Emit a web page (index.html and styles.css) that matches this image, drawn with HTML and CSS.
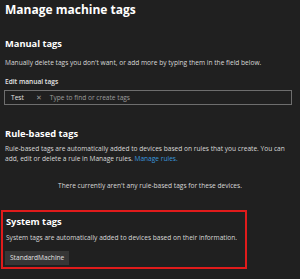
FILE: index.html
```html
<!DOCTYPE html>
<html>
<head>
<meta charset="utf-8">
<link rel="stylesheet" href="styles.css">
</head>
<body>
<div class="panel">
  <h1 class="title">Manage machine tags</h1>
  <section class="manual">
    <h2 class="heading">Manual tags</h2>
    <p class="desc">Manually delete tags you don't want, or add more by typing them in the field below.</p>
    <div class="label">Edit manual tags</div>
    <div class="input">
      <span class="tag">Test</span>
      <span class="remove">✕</span>
      <span class="placeholder">Type to find or create tags</span>
    </div>
  </section>
  <section class="rules">
    <h2 class="heading">Rule-based tags</h2>
    <p class="desc">Rule-based tags are automatically added to devices based on rules that you create. You can add, edit or delete a rule in Manage rules. <a class="link">Manage rules.</a></p>
    <p class="empty">There currently aren't any rule-based tags for these devices.</p>
  </section>
  <section class="system">
    <h2 class="heading">System tags</h2>
    <p class="desc">System tags are automatically added to devices based on their information.</p>
    <span class="chip">StandardMachine</span>
  </section>
</div>
</body>
</html>
```
FILE: styles.css
```css
html, body {
  margin: 0;
  padding: 0;
  background: #202020;
}
.panel {
  width: 300px;
  height: 279px;
  font-family: "Open Sans", "Noto Sans", sans-serif;
  color: #d8d8d8;
  font-size: 6.6px;
  line-height: 10px;
}
.title {
  margin: 0;
  padding: 2px 0 0 5px;
  font-size: 12px;
  line-height: 16px;
  font-weight: 700;
  color: #ffffff;
}
.heading {
  margin: 0;
  font-size: 9.3px;
  line-height: 12px;
  font-weight: 700;
  color: #ffffff;
}
.desc {
  margin: 0;
}
.manual {
  padding: 20px 5px 0 5px;
}
.manual .heading {
  margin-bottom: 8px;
}
.label {
  margin-top: 9px;
  font-weight: 600;
  color: #e6e6e6;
}
.input {
  margin: 3px 3px 0 -1px;
  height: 13px;
  border: 1px solid #6e6e6e;
  display: flex;
  align-items: center;
  padding-left: 6px;
}
.tag {
  color: #e0e0e0;
}
.remove {
  margin-left: 12px;
  font-size: 7px;
  color: #9a9a9a;
}
.placeholder {
  margin-left: 8px;
  color: #9c9c9c;
}
.rules {
  padding: 23px 5px 0 5px;
}
.rules .heading {
  margin-bottom: 4px;
}
.link {
  color: #3a96dd;
}
.empty {
  margin: 17px 0 0 0;
  text-align: center;
}
.system {
  margin: 19px 0 0 1px;
  width: 240px;
  height: 51px;
  border: 2px solid #e01b1b;
  padding: 4px 0 0 2px;
  box-sizing: content-box;
}
.system .heading {
  padding-left: 1px;
  margin-bottom: 5px;
}
.system .desc {
  padding-left: 1px;
}
.chip {
  display: inline-block;
  margin-top: 8px;
  background: #363636;
  padding: 2px 5px;
  color: #e0e0e0;
}
```
